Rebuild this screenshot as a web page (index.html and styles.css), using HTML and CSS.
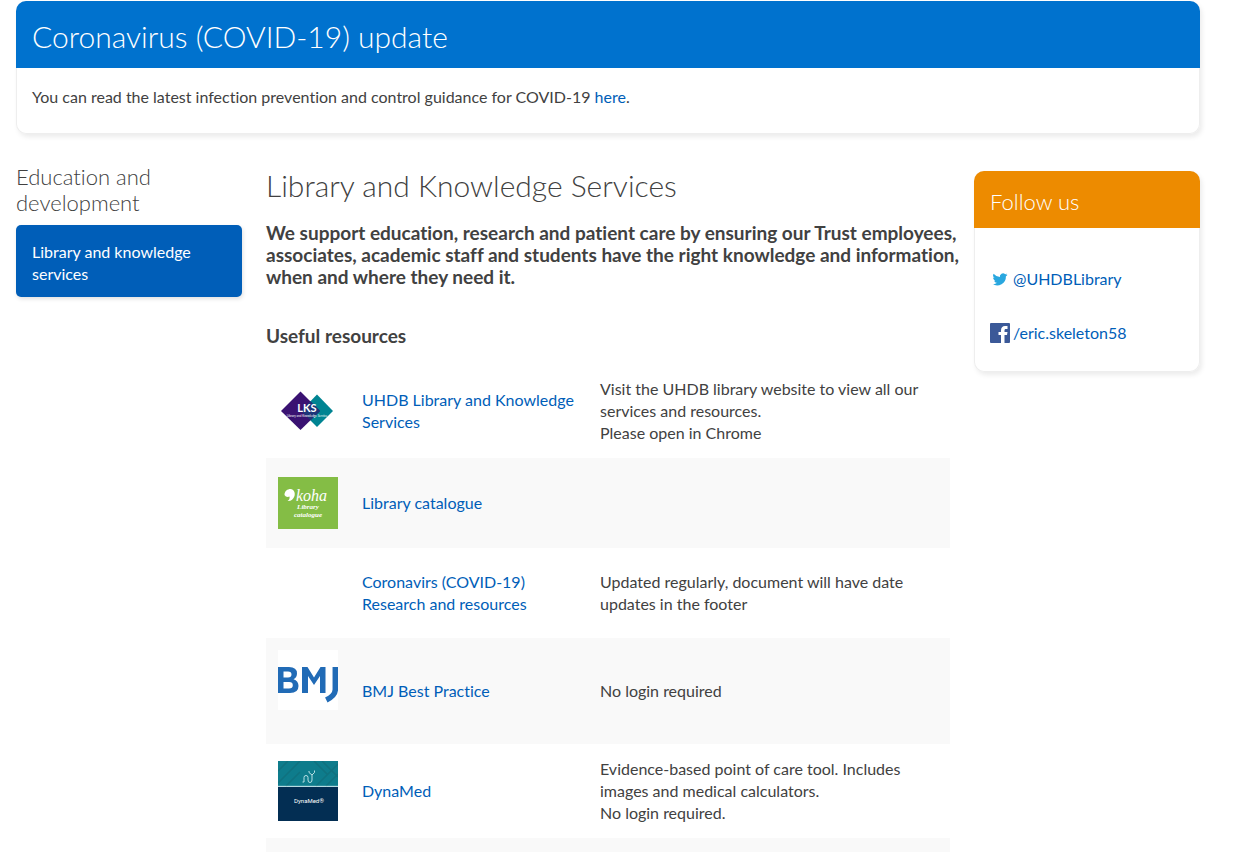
FILE: index.html
```html
<!DOCTYPE html>
<html lang="en">
<head>
    <meta charset="UTF-8">
    <meta name="viewport" content="width=device-width, initial-scale=1.0">
    <title>Library and Knowledge Services</title>
    <link rel="stylesheet" href="styles.css">
</head>
<body>
    <div class="page">
        <section class="card">
            <h2 class="card-title card-title-large">Coronavirus (COVID-19) update</h2>
            <div class="card-body">
                <p>You can read the latest infection prevention and control guidance for COVID-19 <a href="#">here</a>.</p>
            </div>
        </section>

        <div class="columns">
            <nav class="side-nav">
                <h3>Education and development</h3>
                <a class="nav-item" href="#">Library and knowledge services</a>
            </nav>

            <main class="content">
                <h1>Library and Knowledge Services</h1>
                <p class="intro">We support education, research and patient care by ensuring our Trust employees, associates, academic staff and students have the right knowledge and information, when and where they need it.</p>
                <h4>Useful resources</h4>

                <table class="resources">
                    <tr class="row-long">
                        <td class="logo">
                            <svg width="60" height="60" viewBox="0 0 60 60" role="img" aria-label="LKS">
                                <path d="M39 13.500L55 30 39 46 23 30z" fill="#008492"/>
                                <path d="M22.500 10.500L42 30 22.500 49 3 30z" fill="#3a1272"/>
                                <path d="M32.500 20.200L42 30 32.500 39.300 23 30z" fill="#1d3579"/>
                                <text x="29" y="31" class="lks-name">LKS</text>
                                <text x="29" y="36" class="lks-sub">Library and Knowledge Service</text>
                            </svg>
                        </td>
                        <td class="name"><a href="#">UHDB Library and Knowledge Services</a></td>
                        <td>Visit the UHDB library website to view all our services and resources.<br>Please open in Chrome</td>
                    </tr>
                    <tr>
                        <td class="logo">
                            <svg width="60" height="52" viewBox="0 0 60 52" role="img" aria-label="Koha Library catalogue">
                                <path d="M0 0h60v52H0z" fill="#84bd45"/>
                                <path d="M6.500 18c0-4 3-6 6-6 3.500 0 5 4 4 7-1 3.500-4 5.500-7 5 1.500-1 2.500-2.500 2-4.500-1.500 1-4 .500-5-1.500z" fill="#fff"/>
                                <text x="18" y="24" class="koha-name">koha</text>
                                <text x="30" y="32" class="koha-sub">Library</text>
                                <text x="30" y="40" class="koha-sub">catalogue</text>
                            </svg>
                        </td>
                        <td class="name"><a href="#">Library catalogue</a></td>
                        <td></td>
                    </tr>
                    <tr>
                        <td class="logo"></td>
                        <td class="name"><a href="#">Coronavirs (COVID-19) Research and resources</a></td>
                        <td>Updated regularly, document will have date updates in the footer</td>
                    </tr>
                    <tr>
                        <td class="logo logo-raised">
                            <svg width="60" height="60" viewBox="0 0 60 60" role="img" aria-label="BMJ">
                                <path d="M0 0h60v60H0z" fill="#fff"/>
                                <path d="M0 17h11q8 0 8 6.500 0 4-3.500 5.700 5 1.600 5 6.800 0 7-8.500 7H0zM5.500 21.500v6H10q3.500 0 3.500-3t-3.500-3zM5.500 32v6.500H11q3.800 0 3.800-3.300T11 32z" fill="#216bb6" fill-rule="evenodd"/>
                                <path d="M24 43V17h5.500l6.500 10.500L42.500 17h5v26H42V26l-6 9-6-9v17z" fill="#216bb6"/>
                                <path d="M57.300 17v22.500q0 6-9 10.500" fill="none" stroke="#216bb6" stroke-width="5.500"/>
                            </svg>
                        </td>
                        <td class="name"><a href="#">BMJ Best Practice</a></td>
                        <td>No login required</td>
                    </tr>
                    <tr class="row-long">
                        <td class="logo">
                            <svg width="60" height="60" viewBox="0 0 60 60" role="img" aria-label="DynaMed">
                                <path d="M0 0h60v25H0z" fill="#0e7c8c"/>
                                <path d="M0 10L10 0M0 22L22 0M8 25L22 11M36 0l14 14M44 0l16 16M38 25L60 3M48 25l12-12" stroke="#10717f" stroke-width="1.500"/>
                                <path d="M0 26h60v34H0z" fill="#032e53"/>
                                <path d="M0 25.300h60" stroke="#a5d3da"/>
                                <path d="M24.500 21H26v-4.500q0-2 2-2t2 2V19q0 2.500 2 2.500t2-2.500v-5l-3-2.500V10M34 14l2.500-2.500V9.500" fill="none" stroke="#b9e0e4"/>
                                <text x="31" y="42" class="dyna-name">DynaMed®</text>
                            </svg>
                        </td>
                        <td class="name"><a href="#">DynaMed</a></td>
                        <td>Evidence-based point of care tool. Includes images and medical calculators.<br>No login required.</td>
                    </tr>
                    <tr>
                        <td class="logo"></td>
                        <td class="name"></td>
                        <td></td>
                    </tr>
                </table>
            </main>

            <aside class="card card-follow">
                <h3 class="card-title">Follow us</h3>
                <div class="card-body">
                    <a class="social" href="#">
                        <svg width="20" height="20" viewBox="0 0 24 24" aria-hidden="true">
                            <path d="M21 6.800c-.700.300-1.400.500-2.100.600.800-.500 1.300-1.200 1.600-2-.700.400-1.500.700-2.300.900A3.700 3.700 0 0 0 11.900 9.600 10.500 10.500 0 0 1 4.300 5.800a3.700 3.700 0 0 0 1.100 4.900c-.600 0-1.200-.200-1.700-.500 0 1.800 1.300 3.300 3 3.700-.500.100-1.100.200-1.700.100.500 1.500 1.800 2.500 3.500 2.600A7.400 7.400 0 0 1 3 18.100a10.500 10.500 0 0 0 16.100-9.300c.700-.500 1.400-1.200 1.900-2z" fill="#29a7df"/>
                        </svg>
                        @UHDBLibrary
                    </a>
                    <a class="social" href="#">
                        <svg width="20" height="20" viewBox="0 0 20 20" aria-hidden="true">
                            <rect width="20" height="20" rx="1" fill="#3b5998"/>
                            <path d="M11 20v-8H8.500V9H11V7.500C11 4.500 12.500 3 15 3h2.500v3H16c-1.300 0-1.500.600-1.500 1.500V9h3l-.500 3h-2.500v8z" fill="#fff"/>
                        </svg>
                        /eric.skeleton58
                    </a>
                </div>
            </aside>
        </div>
    </div>
</body>
</html>
```
FILE: styles.css
```css
body {
    margin: 0;
    font-family: Lato, sans-serif;
    font-size: 16px;
    line-height: 22px;
    font-variant-ligatures: none;
    color: #414141;
    background-color: #fff;
}

h1, h2, h3, h4, p {
    margin: 0;
}

a {
    color: #005eb8;
    text-decoration: none;
}

a:hover {
    text-decoration: underline;
}

.page {
    padding: 1px 49px 0 16px;
}

.card {
    border-radius: 10px;
    background-color: #fff;
    box-shadow: inset 0 0 0 1px #eee, 2px 3px 5px rgba(0, 0, 0, 0.08);
}

.card-title {
    padding: 18px 16px 13px;
    border-radius: 10px 10px 0 0;
    background-color: #ed8b00;
    color: #fff;
    font-size: 22px;
    font-weight: 300;
    line-height: 26px;
}

.card-title-large {
    padding: 16px 16px 13px;
    background-color: #0072ce;
    font-size: 30px;
    line-height: 38px;
}

.card-body {
    padding: 18px 16px 26px;
}

.columns {
    display: grid;
    grid-template-columns: 226px 1fr 226px;
    gap: 24px;
    align-items: start;
    margin-top: 30px;
}

.side-nav h3 {
    font-size: 22px;
    font-weight: 300;
    line-height: 26px;
    margin-bottom: 9px;
}

.nav-item {
    display: block;
    padding: 16px 50px 12px 16px;
    border-radius: 5px;
    background-color: #005eb8;
    color: #fff;
    box-shadow: 1px 2px 4px rgba(0, 0, 0, 0.12);
}

.content h1 {
    margin-top: 2px;
    font-size: 30px;
    font-weight: 300;
    line-height: 38px;
}

.intro {
    margin: 18px -12px 0 0;
    font-size: 19px;
    font-weight: bold;
}

.content h4 {
    margin-top: 37px;
    font-size: 19px;
}

.resources {
    width: 100%;
    margin-top: 17px;
    border-collapse: collapse;
}

.resources td {
    height: 66px;
    padding: 12px;
    vertical-align: middle;
}

.resources .row-long td {
    height: 70px;
}

.resources tr:nth-child(even) {
    background-color: #f9f9f9;
}

.resources svg {
    display: block;
}

.resources .logo {
    width: 60px;
}

.resources .logo-raised svg {
    margin-bottom: 22px;
}

.resources .name {
    width: 214px;
}

.lks-name {
    fill: #fff;
    font-size: 11px;
    font-weight: bold;
    text-anchor: middle;
}

.lks-sub {
    fill: #fff;
    font-size: 3px;
    text-anchor: middle;
}

.koha-name {
    fill: #fff;
    font-family: "Liberation Serif", serif;
    font-size: 16px;
    font-style: italic;
}

.koha-sub {
    fill: #fff;
    font-family: "Liberation Serif", serif;
    font-size: 7px;
    font-style: italic;
    font-weight: bold;
    text-anchor: middle;
}

.dyna-name {
    fill: #fff;
    font-family: Roboto, sans-serif;
    font-size: 6px;
    text-anchor: middle;
}

.card-follow {
    margin-top: 7px;
}

.card-follow .card-body {
    display: flex;
    flex-direction: column;
    gap: 32px;
    padding-top: 40px;
    padding-bottom: 28px;
}

.social {
    display: flex;
    align-items: center;
    gap: 3px;
}
```
